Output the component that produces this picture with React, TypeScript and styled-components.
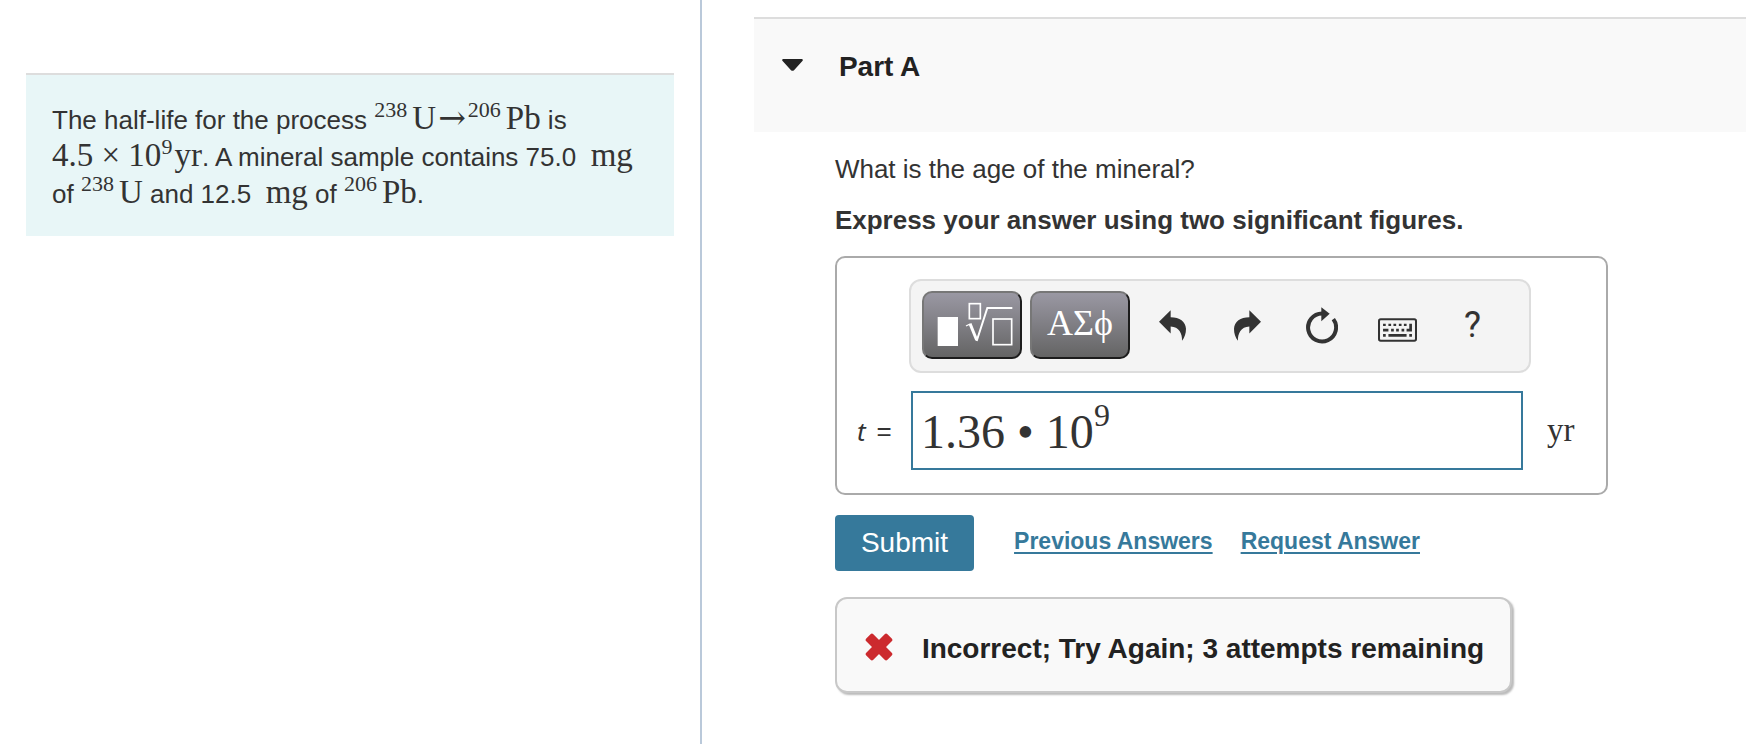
import React, { useState } from "react";
import styled, { createGlobalStyle } from "styled-components";

const sans = `"Liberation Sans", Arial, Helvetica, sans-serif`;
const serif = `"Liberation Serif", "Times New Roman", serif`;
const accent = "#36799b";
const ink = "#333333";

const GlobalStyle = createGlobalStyle`
  *, *::before, *::after { box-sizing: border-box; }
  body {
    margin: 0;
    background: #ffffff;
    color: ${ink};
    font-family: ${sans};
    font-size: 26px;
  }
  button, input { font: inherit; color: inherit; }
`;

const Page = styled.div`
  display: grid;
  grid-template-columns: 201fr 299fr;
  min-height: 100vh;
`;

const ProblemPane = styled.aside`
  min-width: 0;
  padding: 73px 26px 26px;
  border-right: 2px solid #bac9da;
`;

const ProblemCard = styled.section`
  padding: 27px 26px 23px;
  background: #e8f6f7;
  border-top: 2px solid #dddddd;
`;

const ProblemText = styled.p`
  margin: 0;
  line-height: 37px;
`;

const MathText = styled.span`
  font-family: ${serif};
  font-size: 33px;
  line-height: 0;
  white-space: nowrap;
`;

const Arrow = styled.span`
  margin: 0 2px;
  font-family: "DejaVu Serif", serif;
`;

const Sup = styled.sup<{ $before?: boolean }>`
  font-size: 22px;
  line-height: 0;
  vertical-align: 12px;
  margin-right: ${(p) => (p.$before ? 5 : 2)}px;
`;

const WorkPane = styled.main`
  min-width: 0;
  padding: 17px 0 24px 52px;
`;

const PartHeader = styled.header`
  padding: 31px 28px 48px;
  background: #f9f9f9;
  border-top: 2px solid #dddddd;
`;

const PartTitle = styled.h2`
  margin: 0;
  font-size: 28px;
  line-height: 34px;
  font-weight: 700;
  color: #222222;
`;

const PartToggle = styled.button`
  display: flex;
  align-items: center;
  gap: 36px;
  padding: 0;
  border: 0;
  background: none;
  cursor: pointer;

  svg { margin-bottom: 4px; }
`;

const PartBody = styled.div`
  padding: 22px 24px 0 81px;
`;

const Question = styled.p<{ $strong?: boolean }>`
  margin: 0 0 20px;
  line-height: 31px;
  font-weight: ${(p) => (p.$strong ? 700 : 400)};
`;

const AnswerBox = styled.div`
  display: grid;
  grid-template-columns: 72px minmax(0, 1fr) 75px;
  row-gap: 18px;
  align-items: center;
  width: 100%;
  max-width: 773px;
  padding: 21px 0 23px;
  border: 2px solid #aaaaaa;
  border-radius: 10px;
`;

const Toolbar = styled.div`
  grid-column: 2;
  display: flex;
  align-items: center;
  padding: 10px 11px 12px;
  background: #f4f4f4;
  border: 2px solid #dddddd;
  border-radius: 12px;
`;

const PaletteGroup = styled.div`
  display: flex;
  gap: 8px;
  margin-right: 5px;
`;

const PaletteButton = styled.button`
  display: flex;
  align-items: center;
  justify-content: center;
  width: 100px;
  height: 68px;
  padding: 0;
  color: #ffffff;
  font-family: ${serif};
  font-size: 36px;
  background: linear-gradient(#9a98a3, #646464);
  border: 2px solid;
  border-color: #777777 #1c1c1c #1c1c1c #777777;
  border-radius: 10px;
  cursor: pointer;
`;

const GreekLabel = styled.span`
  padding-bottom: 4px;
`;

const ToolButton = styled.button`
  display: flex;
  flex: 0 1 75px;
  align-items: center;
  justify-content: center;
  height: 68px;
  padding: 0;
  border: 0;
  background: none;
  font-family: Roboto, sans-serif;
  font-size: 36px;
  cursor: pointer;
`;

const FieldLabel = styled.label`
  display: flex;
  grid-column: 1;
  gap: 11px;
  padding-left: 20px;
  font-size: 26px;
  line-height: 36px;

  i { font-family: "Noto Sans", sans-serif; }
`;

const MathField = styled.div`
  grid-column: 2;
  display: flex;
  align-items: center;
  height: 79px;
  margin: 0 8px 0 2px;
  padding: 0 8px;
  border: 2px solid ${accent};
  background: #ffffff;
  font-family: ${serif};
`;

const BaseInput = styled.input`
  width: 173px;
  height: 60px;
  padding: 2px 0 0;
  border: 0;
  outline: 0;
  background: none;
  font-size: 48px;
`;

const ExponentInput = styled.input`
  flex: 1;
  min-width: 0;
  height: 36px;
  margin-bottom: 30px;
  padding: 0;
  border: 0;
  outline: 0;
  background: none;
  font-size: 32px;
`;

const Unit = styled.span`
  padding-left: 16px;
  font-family: ${serif};
  font-size: 33px;
`;

const Actions = styled.div`
  display: flex;
  align-items: center;
  flex-wrap: wrap;
  margin-top: 20px;
`;

const SubmitButton = styled.button`
  height: 56px;
  margin-right: 40px;
  padding: 0 26px;
  border: 0;
  border-radius: 4px;
  background: ${accent};
  color: #ffffff;
  font-size: 28px;
  cursor: pointer;
`;

const ActionLink = styled.a`
  margin-right: 28px;
  padding-bottom: 4px;
  color: ${accent};
  font-size: 23px;
  font-weight: 700;
  text-decoration-thickness: 2px;
  text-underline-offset: 3px;
`;

const Feedback = styled.div`
  display: flex;
  align-items: center;
  gap: 29px;
  width: fit-content;
  margin-top: 26px;
  padding: 32px 26px 24px 28px;
  background: #f9f9f9;
  border: 2px solid #c8c8c8;
  border-radius: 12px;
  box-shadow: 2px 2px 2px #bbbbbb;

  svg { margin-bottom: 5px; }
`;

const FeedbackText = styled.strong`
  color: #222222;
  font-size: 28px;
  line-height: 36px;
`;

const CaretIcon = () => (
  <svg width="21" height="12" viewBox="0 0 21 12" aria-hidden="true">
    <path d="M1 0H20Q21.500 .8 20.400 2L12 11.200Q10.500 12.500 9 11.200L.6 2Q-.5 .8 1 0Z" fill="#222" />
  </svg>
);

const TemplateIcon = () => (
  <svg width="96" height="64" viewBox="0 0 288 192" fill="none" stroke="#fff" aria-hidden="true">
    <rect x="41" y="72" width="61" height="87" fill="#fff" stroke="none" />
    <rect x="136" y="32" width="33" height="45" strokeWidth="5" />
    <path d="M126 99L138 93" strokeWidth="4" />
    <path d="M138 92L158 141" strokeWidth="9" />
    <path d="M158 144L190 45H265" strokeWidth="6" />
    <rect x="207" y="78" width="56" height="77" strokeWidth="5" />
  </svg>
);

const UndoIcon = ({ flip }: { flip?: boolean }) => (
  <svg width="27" height="31" viewBox="0 0 81 92" fill={ink} aria-hidden="true">
    <path
      transform={flip ? "translate(81 0) scale(-1 1)" : undefined}
      d="M0 35L35 0V21C62 21 80 34 81 56C81 70 77 82 69 92C70 70 60 50 35 49V70Z"
    />
  </svg>
);

const ResetIcon = () => (
  <svg width="32" height="37" viewBox="0 0 96 110" fill="none" aria-hidden="true">
    <path d="M82 36A42 42 0 1 1 48 19" stroke={ink} strokeWidth="12" />
    <path d="M46 0L71 20L46 42Z" fill={ink} />
  </svg>
);

const KeyboardIcon = () => (
  <svg width="39" height="34" viewBox="0 0 116 100" fill={ink} aria-hidden="true">
    <g transform="translate(0 30)">
      <rect x="3" y="3" width="110" height="64" rx="5" fill="none" stroke={ink} strokeWidth="6" />
      <path d="M15 16h8v7h-8zM31 16h8v7h-8zM46 16h8v7h-8zM62 16h8v7h-8zM77 16h8v7h-8zM93 16h8v23h-16v-8h8z" />
      <path d="M15 31h16v8h-16zM39 31h8v8h-8zM54 31h8v8h-8zM70 31h8v8h-8z" />
      <path d="M15 47h8v8h-8zM31 47h54v8h-54zM93 47h8v8h-8z" />
    </g>
  </svg>
);

const CrossIcon = () => (
  <svg width="28" height="28" viewBox="0 0 28 28" fill="#cc2a2e" aria-hidden="true">
    <rect x="-1" y="9" width="30" height="10" rx="2" transform="rotate(45 14 14)" />
    <rect x="-1" y="9" width="30" height="10" rx="2" transform="rotate(-45 14 14)" />
  </svg>
);

export default function App() {
  const [base, setBase] = useState("1.36 • 10");
  const [exponent, setExponent] = useState("9");

  return (
    <>
      <GlobalStyle />
      <Page>
        <ProblemPane>
          <ProblemCard>
            <ProblemText>
              The half-life for the process{" "}
              <MathText><Sup $before>238</Sup>U<Arrow>→</Arrow><Sup $before>206</Sup>Pb</MathText> is{" "}
              <MathText>4.5 × 10<Sup>9</Sup>yr</MathText>. A mineral sample contains
              75.0&nbsp; <MathText>mg</MathText> of{" "}
              <MathText><Sup $before>238</Sup>U</MathText> and 12.5&nbsp;{" "}
              <MathText>mg</MathText> of <MathText><Sup $before>206</Sup>Pb</MathText>.
            </ProblemText>
          </ProblemCard>
        </ProblemPane>

        <WorkPane>
          <PartHeader>
            <PartTitle>
              <PartToggle type="button" aria-expanded="true">
                <CaretIcon />
                Part A
              </PartToggle>
            </PartTitle>
          </PartHeader>

          <PartBody>
            <Question>What is the age of the mineral?</Question>
            <Question $strong>Express your answer using two significant figures.</Question>

            <AnswerBox>
              <Toolbar role="toolbar" aria-label="Equation tools">
                <PaletteGroup>
                  <PaletteButton type="button" aria-label="Templates"><TemplateIcon /></PaletteButton>
                  <PaletteButton type="button"><GreekLabel>ΑΣϕ</GreekLabel></PaletteButton>
                </PaletteGroup>
                <ToolButton type="button" aria-label="Undo"><UndoIcon /></ToolButton>
                <ToolButton type="button" aria-label="Redo"><UndoIcon flip /></ToolButton>
                <ToolButton type="button" aria-label="Reset"><ResetIcon /></ToolButton>
                <ToolButton type="button" aria-label="Keyboard shortcuts"><KeyboardIcon /></ToolButton>
                <ToolButton type="button">?</ToolButton>
              </Toolbar>
              <FieldLabel htmlFor="answer"><i>t</i><span>=</span></FieldLabel>
              <MathField>
                <BaseInput id="answer" value={base} onChange={(e) => setBase(e.target.value)} />
                <ExponentInput
                  aria-label="Exponent"
                  value={exponent}
                  onChange={(e) => setExponent(e.target.value)}
                />
              </MathField>
              <Unit>yr</Unit>
            </AnswerBox>

            <Actions>
              <SubmitButton type="submit">Submit</SubmitButton>
              <ActionLink href="#previous">Previous Answers</ActionLink>
              <ActionLink href="#request">Request Answer</ActionLink>
            </Actions>

            <Feedback role="status">
              <CrossIcon />
              <FeedbackText>Incorrect; Try Again; 3 attempts remaining</FeedbackText>
            </Feedback>
          </PartBody>
        </WorkPane>
      </Page>
    </>
  );
}
